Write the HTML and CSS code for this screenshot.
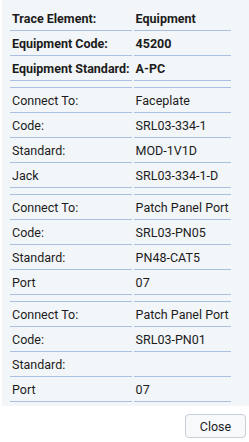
FILE: index.html
```html
<!DOCTYPE html>
<html lang="en">
<head>
  <meta charset="UTF-8" />
  <meta name="viewport" content="width=device-width, initial-scale=1" />
  <title>Trace Details</title>
  <link rel="stylesheet" href="styles.css">
</head>
<body>
  <div class="panel">
    <table class="trace">
      <tr class="head"><td>Trace Element:</td><td>Equipment</td></tr>
      <tr class="head"><td>Equipment Code:</td><td>45200</td></tr>
      <tr class="head"><td>Equipment Standard:</td><td>A-PC</td></tr>
      <tr class="gap"><td></td><td></td></tr>
      <tr><td>Connect To:</td><td>Faceplate</td></tr>
      <tr><td>Code:</td><td>SRL03-334-1</td></tr>
      <tr><td>Standard:</td><td>MOD-1V1D</td></tr>
      <tr><td>Jack</td><td>SRL03-334-1-D</td></tr>
      <tr class="gap"><td></td><td></td></tr>
      <tr><td>Connect To:</td><td>Patch Panel Port</td></tr>
      <tr><td>Code:</td><td>SRL03-PN05</td></tr>
      <tr><td>Standard:</td><td>PN48-CAT5</td></tr>
      <tr><td>Port</td><td>07</td></tr>
      <tr class="gap"><td></td><td></td></tr>
      <tr><td>Connect To:</td><td>Patch Panel Port</td></tr>
      <tr><td>Code:</td><td>SRL03-PN01</td></tr>
      <tr><td>Standard:</td><td></td></tr>
      <tr><td>Port</td><td>07</td></tr>
    </table>
  </div>
  <div class="actions">
    <button type="button" class="close-btn">Close</button>
  </div>
</body>
</html>
```

FILE: styles.css
```css
body {
  margin: 0;
  font-family: Roboto, 'Open Sans', sans-serif;
  font-size: 12.5px;
  color: #1c1c1c;
  background: #fff;
}
.panel {
  margin-left: 2px;
  padding: 6px 6px 4px;
  background: #f3f6f9;
}
.trace {
  border-collapse: separate;
  border-spacing: 2px 0;
}
.trace td {
  height: 24px;
  padding: 0 2px;
  border-bottom: 1px solid #a9c0e2;
  white-space: nowrap;
  vertical-align: middle;
}
.trace .head td {
  font-weight: 700;
}
.trace .gap td {
  height: 6px;
  padding: 0;
}
.actions {
  display: flex;
  justify-content: flex-end;
  padding: 8px 3px 0 0;
}
.close-btn {
  width: 61px;
  height: 24px;
  font-family: inherit;
  font-size: 12.5px;
  color: #1c1c1c;
  background: #f7f9fb;
  border: 1px solid #c6ced9;
  border-radius: 4px;
  cursor: pointer;
}
```
